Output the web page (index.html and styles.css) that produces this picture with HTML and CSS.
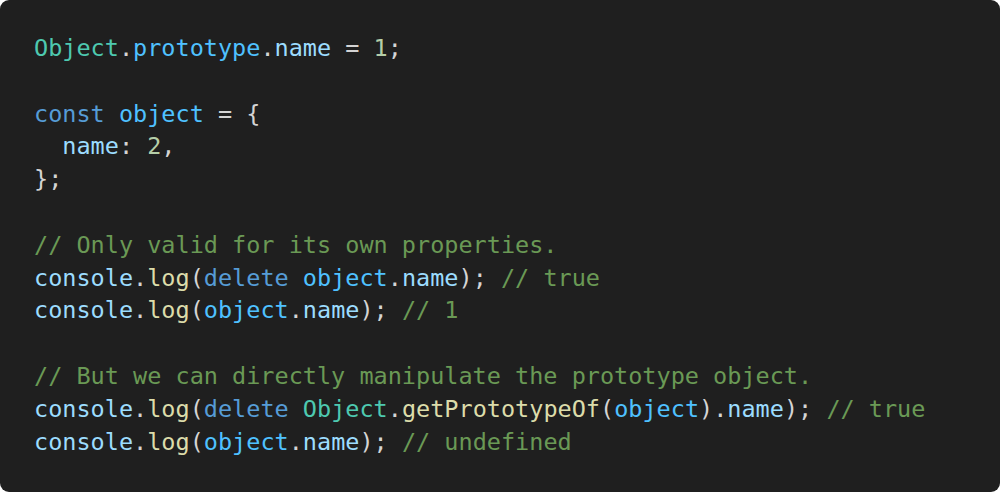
FILE: index.html
```html
<!DOCTYPE html>
<html>
<head>
<meta charset="utf-8">
<link rel="stylesheet" href="styles.css">
</head>
<body>
<div class="code-block">
<pre class="code"><span class="cls">Object</span><span class="p">.</span><span class="var">prototype</span><span class="p">.</span><span class="prop">name</span><span class="p"> = </span><span class="num">1</span><span class="p">;</span>

<span class="kw">const</span> <span class="var">object</span><span class="p"> = {</span>
<span class="p">  </span><span class="prop">name</span><span class="p">: </span><span class="num">2</span><span class="p">,</span>
<span class="p">};</span>

<span class="cm">// Only valid for its own properties.</span>
<span class="prop">console</span><span class="p">.</span><span class="fn">log</span><span class="p">(</span><span class="kw">delete</span> <span class="var">object</span><span class="p">.</span><span class="prop">name</span><span class="p">); </span><span class="cm">// true</span>
<span class="prop">console</span><span class="p">.</span><span class="fn">log</span><span class="p">(</span><span class="var">object</span><span class="p">.</span><span class="prop">name</span><span class="p">); </span><span class="cm">// 1</span>

<span class="cm">// But we can directly manipulate the prototype object.</span>
<span class="prop">console</span><span class="p">.</span><span class="fn">log</span><span class="p">(</span><span class="kw">delete</span> <span class="cls">Object</span><span class="p">.</span><span class="fn">getPrototypeOf</span><span class="p">(</span><span class="var">object</span><span class="p">).</span><span class="prop">name</span><span class="p">); </span><span class="cm">// true</span>
<span class="prop">console</span><span class="p">.</span><span class="fn">log</span><span class="p">(</span><span class="var">object</span><span class="p">.</span><span class="prop">name</span><span class="p">); </span><span class="cm">// undefined</span></pre>
</div>
</body>
</html>
```
FILE: styles.css
```css
html, body {
  margin: 0;
  padding: 0;
  background: #ffffff;
}
.code-block {
  width: 1000px;
  height: 492px;
  box-sizing: border-box;
  background: #1f1f1f;
  border-radius: 9px;
  padding: 32px 34px;
}
.code {
  margin: 0;
  font-family: "DejaVu Sans Mono", "Liberation Mono", monospace;
  font-size: 23.5px;
  line-height: 32.8px;
  color: #d4d4d4;
  white-space: pre;
}
.p { color: #d4d4d4; }
.cls { color: #4ec9b0; }
.var { color: #4fc1ff; }
.prop { color: #9cdcfe; }
.num { color: #b5cea8; }
.kw { color: #569cd6; }
.fn { color: #dcdcaa; }
.cm { color: #6a9955; }
```
